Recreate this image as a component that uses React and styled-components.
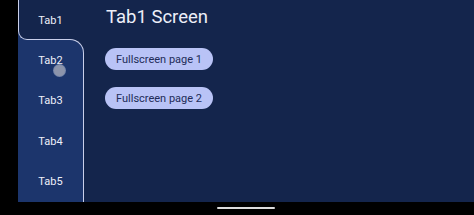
import React from 'react';
import styled, { createGlobalStyle } from 'styled-components';

const DARK = '#14254c';
const RAIL = '#1c356c';
const LINE = '#c9cfea';

const GlobalStyle = createGlobalStyle`
  html, body {
    margin: 0;
    padding: 0;
    background: #000;
  }
  body {
    font-family: Roboto, "Liberation Sans", sans-serif;
  }
`;

const tabs = ['Tab2', 'Tab3', 'Tab4', 'Tab5'];

const App = () => {
  return (
    <>
      <GlobalStyle />
      <Device>
        <Cutout />
        <Screen>
          <Main>
            <Rail>
              <TopSlot>
                <ActiveTab>
                  <TabLabel>Tab1</TabLabel>
                </ActiveTab>
              </TopSlot>
              <LowerRail>
                {tabs.map((t) => (
                  <TabItem key={t}>{t}</TabItem>
                ))}
                <TouchDot />
              </LowerRail>
            </Rail>
            <Content>
              <Title>Tab1 Screen</Title>
              <ButtonList>
                <PillButton>Fullscreen page 1</PillButton>
                <PillButton>Fullscreen page 2</PillButton>
              </ButtonList>
            </Content>
          </Main>
          <GestureBar>
            <HomePill />
          </GestureBar>
        </Screen>
      </Device>
    </>
  );
};

const Device = styled.div`
  display: flex;
  width: 474px;
  height: 215px;
  background: #000;
  overflow: hidden;
`;

const Cutout = styled.div`
  width: 18px;
  flex-shrink: 0;
  background: #000;
`;

const Screen = styled.div`
  flex: 1;
  display: flex;
  flex-direction: column;
`;

const Main = styled.div`
  display: flex;
  height: 201.5px;
  background: ${DARK};
`;

const Rail = styled.div`
  width: 66px;
  flex-shrink: 0;
  display: flex;
  flex-direction: column;
  background: ${DARK};
`;

const TopSlot = styled.div`
  height: 40.5px;
  background: linear-gradient(90deg, ${RAIL} 0 50%, ${DARK} 50%);
`;

const ActiveTab = styled.div`
  position: relative;
  z-index: 1;
  box-sizing: border-box;
  height: 100%;
  margin-right: 14px;
  padding-top: 1px;
  background: ${DARK};
  border-left: 1.5px solid ${LINE};
  border-bottom: 1.5px solid ${LINE};
  border-bottom-left-radius: 9px;
  display: flex;
  align-items: center;
  justify-content: center;
`;

const TabLabel = styled.span`
  padding-left: 12px;
  color: #eef0fa;
  font-size: 11px;
`;

const LowerRail = styled.div`
  position: relative;
  flex: 1;
  margin-top: -1.5px;
  background: ${RAIL};
  border-top: 1.5px solid ${LINE};
  border-right: 1.5px solid ${LINE};
  border-top-right-radius: 14px;
  display: flex;
  flex-direction: column;

  &::before {
    content: '';
    position: absolute;
    top: -1.5px;
    left: 0;
    width: 10px;
    height: 1.5px;
    background: ${RAIL};
  }
`;

const TabItem = styled.div`
  height: 40.5px;
  padding-top: 1px;
  box-sizing: border-box;
  display: flex;
  align-items: center;
  justify-content: center;
  color: #eef0fa;
  font-size: 11px;
`;

const TouchDot = styled.div`
  position: absolute;
  left: 36px;
  top: 25.5px;
  width: 11px;
  height: 11px;
  border-radius: 50%;
  background: #8c94ab;
  box-shadow: 0 0 0 1px rgba(190, 198, 220, 0.55);
`;

const Content = styled.div`
  flex: 1;
  padding: 4px 0 0 21px;
`;

const Title = styled.div`
  padding-left: 1px;
  color: #eceef8;
  font-size: 18.5px;
  line-height: 26px;
`;

const ButtonList = styled.div`
  display: flex;
  flex-direction: column;
  align-items: flex-start;
  gap: 17px;
  margin-top: 18px;
`;

const PillButton = styled.button`
  height: 22px;
  padding: 0 11px;
  border: none;
  border-radius: 11px;
  background: #b9c3f6;
  color: #222c58;
  font-family: Roboto, "Liberation Sans", sans-serif;
  font-size: 11px;
  cursor: pointer;
`;

const GestureBar = styled.div`
  flex: 1;
  display: flex;
  justify-content: center;
  padding-top: 5px;
`;

const HomePill = styled.div`
  width: 58px;
  height: 2.5px;
  border-radius: 2px;
  background: #dcdcdc;
`;

export default App;
